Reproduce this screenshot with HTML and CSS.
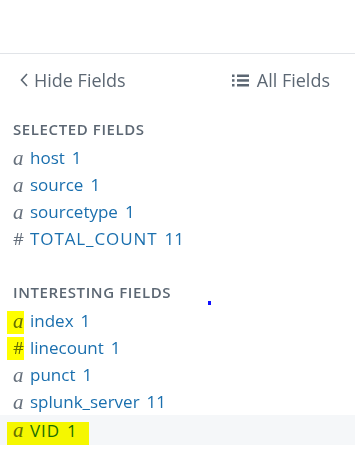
FILE: index.html
```html
<!DOCTYPE html>
<html lang="en">
<head>
    <meta charset="UTF-8">
    <title>Fields</title>
    <link rel="stylesheet" href="styles.css">
</head>
<body>
    <div class="top"></div>

    <div class="toolbar">
        <a class="tool-link">
            <svg class="chevron" width="8" height="14" viewBox="0 0 8 14"><path d="M7 1 L1.5 7 L7 13" fill="none" stroke="#5c6773" stroke-width="1.6"/></svg>
            Hide Fields
        </a>
        <a class="tool-link">
            <svg class="list-icon" width="17" height="13" viewBox="0 0 17 13"><rect x="0" y="0.5" width="2.5" height="2.5"/><rect x="0" y="5.2" width="2.5" height="2.5"/><rect x="0" y="10" width="2.5" height="2.5"/><rect x="5" y="0.5" width="12" height="2.5"/><rect x="5" y="5.2" width="12" height="2.5"/><rect x="5" y="10" width="12" height="2.5"/></svg>
            All Fields
        </a>
    </div>

    <div class="section">
        <div class="section-title">Selected Fields</div>
        <div class="field"><span class="type">a</span><span class="name">host</span><span class="count">1</span></div>
        <div class="field"><span class="type">a</span><span class="name">source</span><span class="count">1</span></div>
        <div class="field"><span class="type">a</span><span class="name">sourcetype</span><span class="count">1</span></div>
        <div class="field"><span class="type num">#</span><span class="name caps">TOTAL_COUNT</span><span class="count">11</span></div>
    </div>

    <div class="section second">
        <div class="section-title">Interesting Fields <span class="dot"></span></div>
        <div class="field"><span class="type">a</span><span class="name">index</span><span class="count">1</span><span class="mark mark-icon"></span></div>
        <div class="field"><span class="type num">#</span><span class="name">linecount</span><span class="count">1</span><span class="mark mark-icon mark-hash"></span></div>
        <div class="field"><span class="type">a</span><span class="name">punct</span><span class="count">1</span></div>
        <div class="field"><span class="type">a</span><span class="name">splunk_server</span><span class="count">11</span></div>
        <div class="field hover"><span class="type">a</span><span class="name caps">VID</span><span class="count">1</span><span class="mark mark-row"></span><span class="mark mark-tail"></span></div>
    </div>
</body>
</html>
```

FILE: styles.css
```css
body {
    margin: 0;
    background: #ffffff;
    font-family: 'Open Sans', sans-serif;
    color: #5c6773;
}
.top {
    height: 53px;
    border-bottom: 1px solid #e1e4e8;
}
.toolbar {
    display: flex;
    justify-content: space-between;
    align-items: center;
    height: 52px;
    padding: 0 25px 0 20px;
}
.tool-link {
    display: flex;
    align-items: center;
    font-size: 18px;
    color: #5c6773;
}
.chevron {
    margin-right: 6px;
}
.list-icon {
    fill: #5c6773;
    margin-right: 8px;
}
.section {
    margin-top: 13px;
}
.section.second {
    margin-top: 30px;
}
.section-title {
    position: relative;
    padding-left: 13px;
    font-size: 15px;
    font-weight: 600;
    line-height: 20px;
    letter-spacing: 0.6px;
    text-transform: uppercase;
    color: #5c6773;
    margin-bottom: 5px;
}
.dot {
    position: absolute;
    left: 208px;
    top: 19px;
    width: 3px;
    height: 4px;
    background: #1010ff;
}
.field {
    position: relative;
    display: flex;
    align-items: center;
    height: 27px;
    padding-left: 13px;
    font-size: 17px;
    color: #1a6fae;
}
.field.hover {
    height: 30px;
    background: #f5f7f9;
}
.type {
    width: 17px;
    font-family: 'Liberation Serif', serif;
    font-style: italic;
    font-size: 21px;
    line-height: 20px;
    color: #66707c;
}
.type.num {
    font-family: 'Open Sans', sans-serif;
    font-style: normal;
    font-size: 17px;
}
.caps {
    letter-spacing: 0.9px;
}
.count {
    margin-left: 7px;
}
.mark {
    position: absolute;
    background: #ffff00;
    mix-blend-mode: multiply;
}
.mark-icon {
    left: 7px;
    top: 4px;
    width: 17px;
    height: 23px;
}
.mark-hash {
    top: 3px;
}
.mark-row {
    left: 7px;
    top: 7px;
    width: 82px;
    height: 26px;
}
.mark-tail {
    left: 7px;
    top: 33px;
    width: 10px;
    height: 2px;
}
```
